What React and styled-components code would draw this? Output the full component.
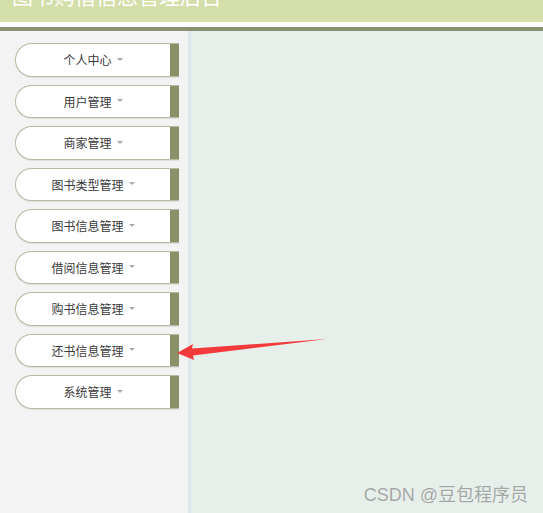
import React from 'react'
import styled, { createGlobalStyle } from 'styled-components'

const GlobalStyle = createGlobalStyle`
  html, body {
    margin: 0;
    padding: 0;
    height: 100%;
    background: #e6efea;
    font-family: "Noto Sans CJK SC", "Noto Sans", sans-serif;
  }
  #root {
    height: 100%;
  }
`

const Page = styled.div`
  position: relative;
  display: flex;
  flex-direction: column;
  height: 513px;
  overflow: hidden;
`

const Header = styled.div`
  height: 22px;
  background: #d3dea8;
  overflow: hidden;
  border-bottom: 5px solid #fff;
`

const Title = styled.div`
  margin: -19px 0 0 12px;
  color: #fff;
  font-size: 21px;
  line-height: 28px;
  white-space: nowrap;
`

const Rule = styled.div`
  height: 4px;
  background: #8b9270;
`

const Body = styled.div`
  flex: 1;
  display: flex;
`

const Sidebar = styled.div`
  width: 191px;
  background: #f3f3f3;
  border-right: 3px solid #dbe9ec;
  display: flex;
  flex-direction: column;
  gap: 8px;
  padding: 12px 0 0 15px;
  box-sizing: border-box;
`

const Main = styled.div`
  flex: 1;
  background: #e6efea;
`

const MenuButton = styled.div`
  width: 164px;
  height: 33.5px;
  box-sizing: border-box;
  display: flex;
  background: #fff;
  border: 1px solid #b9b8a2;
  border-right: none;
  border-radius: 17px 0 0 17px;
  box-shadow: 0 1px 1px rgba(0, 0, 0, 0.08);
`

const Label = styled.div`
  flex: 1;
  display: flex;
  align-items: center;
  justify-content: center;
  gap: 5px;
  color: #3a3a3a;
  font-size: 12px;
`

const Caret = styled.span`
  width: 0;
  height: 0;
  border-left: 3px solid transparent;
  border-right: 3px solid transparent;
  border-top: 3px solid #aaa;
  margin-top: -1px;
`

const Bar = styled.div`
  width: 9px;
  background: #8c9068;
`

const Arrow = styled.svg`
  position: absolute;
  left: 0;
  top: 0;
  pointer-events: none;
`

const Watermark = styled.div`
  position: absolute;
  right: 15px;
  bottom: 7px;
  font-family: "Liberation Sans", "Noto Sans CJK SC", sans-serif;
  font-size: 18px;
  color: #a2a6a4;
  text-shadow: 0 0 1px #fff;
`

const menus = [
  '个人中心',
  '用户管理',
  '商家管理',
  '图书类型管理',
  '图书信息管理',
  '借阅信息管理',
  '购书信息管理',
  '还书信息管理',
  '系统管理',
]

export default function App() {
  return (
    <Page>
      <GlobalStyle />
      <Header>
        <Title>图书购借信息管理后台</Title>
      </Header>
      <Rule />
      <Body>
        <Sidebar>
          {menus.map(m => (
            <MenuButton key={m}>
              <Label>
                {m}
                <Caret />
              </Label>
              <Bar />
            </MenuButton>
          ))}
        </Sidebar>
        <Main />
      </Body>
      <Arrow width="543" height="513" viewBox="0 0 543 513">
        <polygon
          points="177,353 193,344 192,348.5 327,339 193,355.5 194,360"
          fill="#f33a3a"
        />
      </Arrow>
      <Watermark>CSDN @豆包程序员</Watermark>
    </Page>
  )
}
